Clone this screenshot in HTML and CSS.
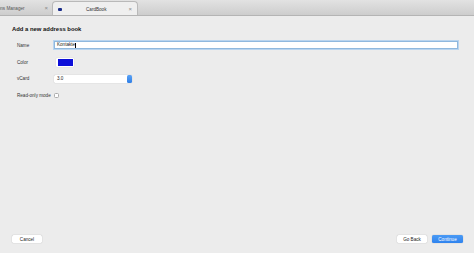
FILE: index.html
```html
<!DOCTYPE html>
<html lang="en">
<head>
<meta charset="UTF-8">
<title>CardBook</title>
<link rel="stylesheet" href="styles.css">
</head>
<body>
<div class="tabbar">
    <div class="tab tab-off">
        <span class="tab-title">Add-ons Manager</span>
        <span class="tab-close">&times;</span>
    </div>
    <div class="tab tab-on">
        <span class="tab-icon"></span>
        <span class="tab-title">CardBook</span>
        <span class="tab-close">&times;</span>
    </div>
</div>

<div class="wizard">
    <div class="heading">Add a new address book</div>

    <div class="form">
        <div class="row">
            <label class="label">Name</label>
            <div class="input">Kontakte<span class="caret"></span></div>
        </div>
        <div class="row">
            <label class="label">Color</label>
            <div class="swatch"><span></span></div>
        </div>
        <div class="row">
            <label class="label">vCard</label>
            <div class="select">3.0<span class="stepper"></span></div>
        </div>
        <div class="row">
            <label class="label">Read-only mode</label>
            <span class="check"></span>
        </div>
    </div>

    <div class="footer">
        <button class="btn">Cancel</button>
        <div class="spacer"></div>
        <button class="btn">Go Back</button>
        <button class="btn primary">Continue</button>
    </div>
</div>
</body>
</html>
```
FILE: styles.css
```css
body {
    margin: 0;
    width: 474px;
    height: 253px;
    background: #ececec;
    font-family: "Liberation Sans", Arial, sans-serif;
    color: #222;
    display: flex;
    flex-direction: column;
    overflow: hidden;
}

/* tab strip */
.tabbar {
    height: 15px;
    flex: none;
    display: flex;
    align-items: flex-end;
    background: linear-gradient(#e2e2e2, #cdcdcd);
    border-bottom: 1px solid #b4b4b4;
    overflow: hidden;
}

.tab {
    height: 14px;
    display: flex;
    align-items: center;
    font-size: 4.6px;
    color: #555;
    box-sizing: border-box;
}

.tab-off {
    width: 64px;
    margin-left: -12px;
    padding: 0 4px 0 0;
}

.tab-on {
    width: 86px;
    padding: 0 5px;
    background: #efefef;
    border: 1px solid #b9b9b9;
    border-bottom: none;
    border-radius: 4px 4px 0 0;
    height: 15px;
    margin-bottom: -1px;
    color: #333;
}

.tab-on .tab-title {
    text-align: center;
}

.tab-title {
    flex: 1;
}

.tab-close {
    font-size: 6px;
    color: #888;
}

.tab-icon {
    width: 4px;
    height: 3px;
    background: #1a2d8a;
    border-radius: 1px;
    margin-right: 2px;
}

/* page */
.wizard {
    flex: 1;
    display: flex;
    flex-direction: column;
    padding: 10px 11px 10px 12px;
}

.heading {
    font-weight: bold;
    font-size: 5.9px;
    color: #111;
}

.form {
    flex: 1;
    padding: 5px 5px 0 5px;
}

.row {
    display: flex;
    align-items: center;
    height: 16.7px;
}

.label {
    width: 37px;
    font-size: 4.6px;
    color: #333;
}

.input {
    flex: 1;
    height: 8px;
    box-sizing: border-box;
    border: 1px solid #8fb8de;
    box-shadow: 0 0 0 1px #b8d4ef;
    background: #fff;
    font-size: 4.6px;
    line-height: 6px;
    padding-left: 2px;
    display: flex;
    align-items: center;
}

.caret {
    width: 0.5px;
    height: 5px;
    background: #000;
}

.swatch {
    width: 18px;
    height: 9px;
    box-sizing: border-box;
    margin-left: 2px;
    padding: 1px 1.5px;
    background: #fff;
    border-radius: 1px;
    box-shadow: 0 0 1px #bbb;
}

.swatch span {
    display: block;
    height: 100%;
    background: #0d0fd9;
}

.select {
    width: 78px;
    height: 8px;
    box-sizing: border-box;
    background: #fff;
    border-radius: 1.5px;
    box-shadow: 0 0 1px #aaa;
    font-size: 4.6px;
    padding-left: 3px;
    display: flex;
    align-items: center;
    justify-content: space-between;
}

.stepper {
    width: 5px;
    height: 8px;
    background: linear-gradient(#5aa2f5, #2f7ee6);
    border-radius: 1.5px;
}

.check {
    width: 5px;
    height: 5px;
    box-sizing: border-box;
    margin-left: 0;
    background: #fff;
    border: 0.5px solid #aaa;
    border-radius: 1.5px;
}

/* buttons */
.footer {
    display: flex;
    align-items: center;
    gap: 5px;
}

.spacer {
    flex: 1;
}

.btn {
    font-family: inherit;
    font-size: 4.6px;
    height: 8px;
    padding: 0 5px;
    min-width: 30px;
    border: none;
    border-radius: 1.5px;
    background: #fff;
    color: #222;
    box-shadow: 0 0 1px #999;
}

.btn.primary {
    background: linear-gradient(#4a9af5, #2f83ee);
    color: #fff;
    min-width: 31px;
}
```
